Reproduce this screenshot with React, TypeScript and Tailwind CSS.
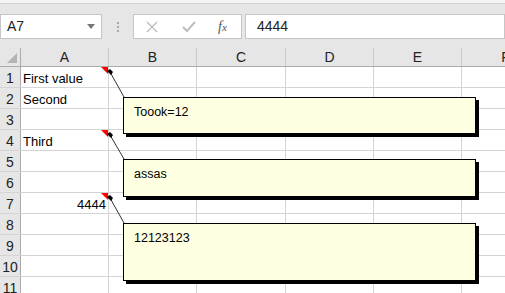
import React from 'react';

const cols = [
  { name: 'A', w: 'w-[88px]' },
  { name: 'B', w: 'w-[88px]' },
  { name: 'C', w: 'w-[89px]' },
  { name: 'D', w: 'w-[88px]' },
  { name: 'E', w: 'w-[88px]' },
  { name: 'F', w: 'w-[88px]' },
];

const cellA: Record<number, { text: string; right?: boolean }> = {
  1: { text: 'First value' },
  2: { text: 'Second' },
  4: { text: 'Third' },
  7: { text: '4444', right: true },
};

const comments = [
  { row: 1, boxTop: 97, top: 'top-[97px]', h: 'h-[37px]', text: 'Toook=12' },
  { row: 4, boxTop: 159, top: 'top-[159px]', h: 'h-[38px]', text: 'assas' },
  { row: 7, boxTop: 223, top: 'top-[223px]', h: 'h-[58px]', text: '12123123' },
];

function FormulaBar() {
  return (
    <div className="bg-[#e6e6e6]">
      <div className="h-[4px] bg-[#f3f3f3] border-b border-[#d4d4d4]" />
      <div className="flex items-center pt-[10px] pb-[9px]">
        {/* Name box */}
        <div className="w-[102px] h-[25px] bg-white border border-[#c6c6c6] flex items-center justify-between pl-[6px] pr-[6px]">
          <span className="text-[14px] text-[#222]">A7</span>
          <svg width="8" height="5" viewBox="0 0 8 5">
            <path d="M0 0h8L4 5z" fill="#777" />
          </svg>
        </div>
        <div className="w-[31px] flex flex-col items-center gap-[2px]">
          <div className="w-[2px] h-[2px] bg-[#a8a8a8]" />
          <div className="w-[2px] h-[2px] bg-[#a8a8a8]" />
          <div className="w-[2px] h-[2px] bg-[#a8a8a8]" />
        </div>
        {/* Cancel / Enter / fx */}
        <div className="w-[109px] h-[25px] bg-white border border-[#c6c6c6] flex items-center">
          <svg className="ml-[12px]" width="12" height="12" viewBox="0 0 12 12">
            <path d="M1 1l10 10M11 1L1 11" stroke="#bdbdbd" strokeWidth="1.4" />
          </svg>
          <svg className="ml-[24px]" width="14" height="12" viewBox="0 0 14 12">
            <path d="M1 6l4 4 8-9" stroke="#bdbdbd" strokeWidth="2" fill="none" />
          </svg>
          <span className="ml-[22px] text-[14px] italic text-[#555]" style={{ fontFamily: '"Liberation Serif", serif' }}>
            f<span className="text-[11px]">x</span>
          </span>
        </div>
        <div className="ml-[3px] flex-1 h-[25px] bg-white border border-[#c6c6c6] flex items-center pl-[11px]">
          <span className="text-[14px] text-[#222]">4444</span>
        </div>
      </div>
    </div>
  );
}

function Grid() {
  const rows = Array.from({ length: 11 }, (_, i) => i + 1);
  return (
    <div className="bg-white">
      <div className="flex h-[19px] bg-[#e6e6e6] border-b border-[#ababab]">
        <div className="w-[21px] shrink-0 border-r border-[#ababab] relative">
          <svg className="absolute right-[3px] bottom-[3px]" width="10" height="10" viewBox="0 0 10 10">
            <path d="M10 0v10H0z" fill="#b4b4b4" />
          </svg>
        </div>
        {cols.map((c) => (
          <div
            key={c.name}
            className={`${c.w} shrink-0 border-r border-[#c8c8c8] flex items-center justify-center text-[14px] text-[#222]`}
          >
            {c.name}
          </div>
        ))}
      </div>
      {rows.map((r) => (
        <div key={r} className="flex h-[21px] border-b border-[#d4d4d4]">
          <div className="w-[21px] shrink-0 bg-[#e6e6e6] border-r border-[#ababab] flex items-end justify-center pb-[1px] text-[14px] leading-[16px] text-[#222]">
            {r}
          </div>
          {cols.map((c, ci) => {
            const v = ci === 0 ? cellA[r] : undefined;
            return (
              <div
                key={c.name}
                className={`${c.w} shrink-0 border-r border-[#d4d4d4] flex items-end pb-[1px] px-[2px] text-[13px] leading-[14px] text-black ${
                  v?.right ? 'justify-end' : 'justify-start'
                }`}
              >
                {v?.text}
              </div>
            );
          })}
        </div>
      ))}
    </div>
  );
}

function Comments() {
  return (
    <>
      <svg className="absolute left-0 top-0 pointer-events-none" width="505" height="293">
        {comments.map((c) => {
          const y = 67 + (c.row - 1) * 21;
          return (
            <g key={c.row}>
              <path d={`M101 ${y}h7v7z`} fill="#ff0000" />
              <line x1="110" y1={y + 5} x2="124" y2={c.boxTop} stroke="#333" strokeWidth="1" />
              <path d={`M107 ${y + 4}l3 -2l3 3l-2 3z`} fill="#000" />
            </g>
          );
        })}
      </svg>
      {comments.map((c) => (
        <div
          key={c.row}
          className={`absolute left-[123px] ${c.top} ${c.h} w-[353px] bg-[#ffffe1] border border-black shadow-[3px_3px_0_#000] pl-[10px] pt-[7px] text-[12.5px] leading-[15px] text-black`}
        >
          {c.text}
        </div>
      ))}
    </>
  );
}

export default function App() {
  return (
    <div
      className="relative w-[505px] h-[293px] overflow-hidden bg-white"
      style={{ fontFamily: '"Liberation Sans", Arial, sans-serif' }}
    >
      <FormulaBar />
      <Grid />
      <Comments />
    </div>
  );
}
